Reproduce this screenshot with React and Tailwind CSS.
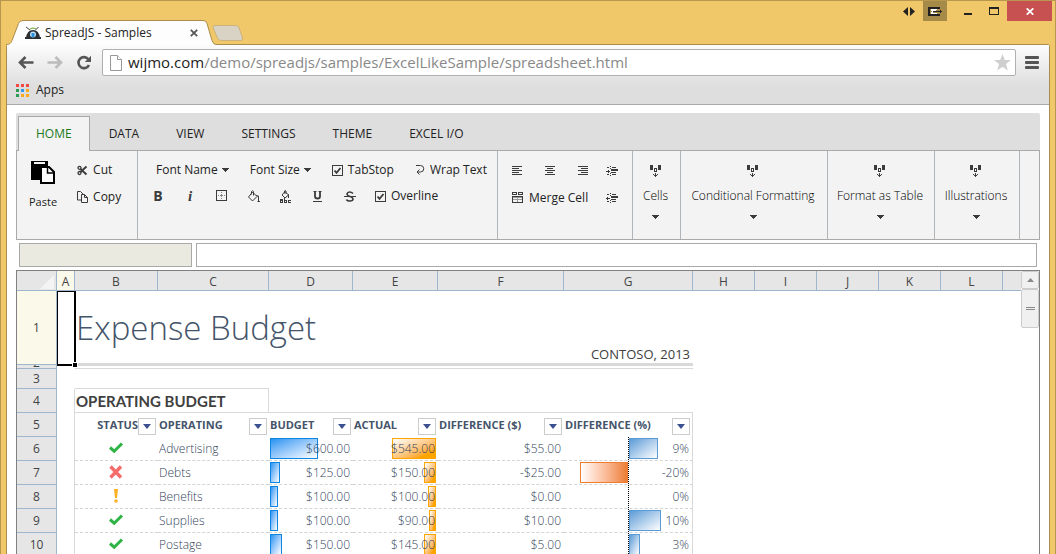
import React, { useState } from "react";

const TABS = ["HOME", "DATA", "VIEW", "SETTINGS", "THEME", "EXCEL I/O"];

const COLUMNS = ["A", "B", "C", "D", "E", "F", "G", "H", "I", "J", "K", "L", ""];

const HEADERS = ["OPERATING", "BUDGET", "ACTUAL", "DIFFERENCE ($)", "DIFFERENCE (%)"];

const ROWS = [
  { n: 6, status: "ok", name: "Advertising", budget: 600, actual: 545, diff: "$55.00", pct: 9.17 },
  { n: 7, status: "bad", name: "Debts", budget: 125, actual: 150, diff: "-$25.00", pct: -20 },
  { n: 8, status: "warn", name: "Benefits", budget: 100, actual: 100, diff: "$0.00", pct: 0 },
  { n: 9, status: "ok", name: "Supplies", budget: 100, actual: 90, diff: "$10.00", pct: 10 },
  { n: 10, status: "ok", name: "Postage", budget: 150, actual: 145, diff: "$5.00", pct: 3.33 },
];

// px per unit for the data bars
const MONEY_SCALE = 0.08;
const POS_SCALE = 3.2;
const NEG_SCALE = 2.4;

const money = (v) => `$${v.toFixed(2)}`;

/* ---------- Icons ---------- */

const Pix = ({ w = 12, h = 12, children, className = "" }) => (
  <svg
    width={w}
    height={h}
    viewBox={`0 0 ${w} ${h}`}
    fill="#3b3b3b"
    shapeRendering="crispEdges"
    className={`shrink-0 ${className}`}
    aria-hidden="true"
  >
    {children}
  </svg>
);

const ArrowDown = () => (
  <Pix w={7} h={4}>
    <path d="M0 0h7v1H0zM1 1h5v1H1zM2 2h3v1H2zM3 3h1v1H3z" />
  </Pix>
);

const BlocksIcon = () => (
  <Pix>
    <path d="M0 0h3v5H0zM8 0h3v5H8z" />
    <path d="M4 3h3v4H4zM5 4v2h1V4z" fillRule="evenodd" />
    <path d="M5 8h1v1H5zM3 9h1v1H3zM5 9h1v1H5zM7 9h1v1H7zM4 10h3v1H4zM5 11h1v1H5z" />
  </Pix>
);

const PasteIcon = () => (
  <svg width="24" height="23" viewBox="0 0 24 23" aria-hidden="true">
    <path d="M0 0h17v6H10v13H0z" fill="#000" />
    <path d="M3 1h11v2H3z" fill="#f3f3f3" />
    <path d="M10 6h8l5 5v11H10z" fill="#fff" stroke="#000" strokeWidth="2" />
    <path d="M16.500 6v6h6.500" fill="none" stroke="#000" strokeWidth="1.500" />
  </svg>
);

const CutIcon = () => (
  <svg width="11" height="11" viewBox="0 0 11 11" fill="none" stroke="#3b3b3b" aria-hidden="true">
    <circle cx="2.500" cy="2.800" r="1.500" strokeWidth="1.300" />
    <circle cx="2.500" cy="8" r="1.500" strokeWidth="1.300" />
    <path d="M3.500 4L9.500 9.500M3.500 7L9.500 1.500" strokeWidth="1.900" />
  </svg>
);

const CopyIcon = () => (
  <svg width="11" height="12" viewBox="0 0 11 12" fill="#f3f3f3" stroke="#3b3b3b" aria-hidden="true">
    <path d="M.5.5h3l2.500 2.500v6H.5z" />
    <path d="M4.500 3.500h3l3 3v5h-6z" />
    <path d="M7.500 3.500v3h3" fill="none" />
  </svg>
);

const BordersIcon = () => (
  <Pix>
    <path d="M0 0h11v11H0zM1 1v9h9V1z" fillRule="evenodd" />
    <path d="M5 2h1v1H5zM5 4h1v3H5zM5 8h1v1H5zM2 5h1v1H2zM4 5h3v1H4zM8 5h1v1H8z" fill="#888" />
  </Pix>
);

const FillIcon = () => (
  <svg width="12" height="12" viewBox="0 0 12 12" fill="none" stroke="#3b3b3b" aria-hidden="true">
    <path d="M4.500 2L9 6.500L4.500 11L.500 7z" />
    <path d="M3.500 4.500V1.500q1-1.500 2 0V5.500" />
    <path d="M8 5.500l2.500.5V11M9.500 11.500h2.500" />
  </svg>
);

const FontColorIcon = () => (
  <svg width="12" height="13" viewBox="0 0 12 13" fill="none" stroke="#3b3b3b" aria-hidden="true">
    <path d="M5 1.500L8.500 5L5 8L2 5z" />
    <path d="M4.500 3.500V1q.5-1 1.500 0V4M8.500 4.500V8" />
    <g shapeRendering="crispEdges" stroke="none" fill="#3b3b3b">
      <path d="M0 9h3v4H0zM1 11v1h1v-1z" fillRule="evenodd" />
      <path d="M4 8h1v5H4zM5 10h2v3H5zM5 11v1h1v-1z" fillRule="evenodd" />
      <path d="M8 10h3v1H9v1h2v1H8z" />
    </g>
  </svg>
);

const WrapIcon = () => (
  <svg width="10" height="10" viewBox="0 0 10 10" fill="none" stroke="#3b3b3b" aria-hidden="true">
    <path d="M1 .500h4.500a3 3 0 0 1 0 6.500H2.500" />
    <path d="M4.500 4.500L2 7l2.500 2.500" />
  </svg>
);

const AlignIcon = ({ d }) => (
  <Pix w={10} h={10}>
    <path d={d} />
  </Pix>
);

const IndentIcon = ({ out }) => (
  <Pix w={12} h={10}>
    <path d="M4 0h1v1H4zM4 2h1v1H4zM4 7h1v1H4zM4 9h1v1H4zM6 1h4v1H6zM1 1h2v1H1zM1 8h2v1H1zM6 8h4v1H6z" />
    <path d="M5 3h7v2H5zM5 6h5v1H5z" />
    {out ? <path d="M0 5h4v1H0zM1 4h1v3H1z" /> : <path d="M0 5h4v1H0zM2 4h1v3H2z" />}
  </Pix>
);

const MergeIcon = () => (
  <Pix>
    <path d="M0 0h5v3H0zM1 1v1h3V1zM6 0h5v3H6zM7 1v1h3V1z" fillRule="evenodd" />
    <path d="M0 4h11v7H0zM1 5v5h9V5z" fillRule="evenodd" />
    <path d="M1 5h9v1H1zM5 6h1v4H5zM1 7h9v1H1z" fill="#999" />
  </Pix>
);

const StatusIcon = ({ kind }) => {
  if (kind === "ok") {
    return (
      <svg width="16" height="14" viewBox="0 0 16 14" role="img" aria-label="On budget">
        <path d="M2 6.500l4.200 3.700L14 2.500" fill="none" stroke="#2fb344" strokeWidth="3" />
      </svg>
    );
  }
  if (kind === "bad") {
    return (
      <svg width="16" height="14" viewBox="0 0 16 14" role="img" aria-label="Over budget">
        <path d="M2.500 1.500L13 12.500M13 1.500L2.500 12.500" fill="none" stroke="#f56c6c" strokeWidth="3.400" />
      </svg>
    );
  }
  return (
    <svg width="16" height="14" viewBox="0 0 16 14" role="img" aria-label="Warning">
      <path d="M6 0h4l-1 9H7z" fill="#fdb022" />
      <circle cx="8" cy="12" r="1.800" fill="#fdb022" />
    </svg>
  );
};

/* ---------- Browser chrome ---------- */

const TitleBar = () => (
  <header className="flex h-[43px] items-end justify-between">
    <div className="flex items-end pl-[5px]">
      <div className="relative z-10 -mb-px h-[25px] w-[210px]">
        <svg className="absolute inset-0" width="210" height="25" viewBox="0 0 210 25" aria-hidden="true">
          <path
            d="M0 25v-.5C4 24.500 5 23 6 20.500L12.500 3.500Q13.700.500 17 .500H197Q200 .500 201 3.500L206 20.500Q207.500 24.500 210 24.500V25z"
            fill="#fdfdfd"
          />
          <path
            d="M0 24.500C4 24.500 5 23 6 20.500L12.500 3.500Q13.700.500 17 .500H197Q200 .500 201 3.500L206 20.500Q207.500 24.500 210 24.500"
            fill="none"
            stroke="#ab8d4b"
          />
        </svg>
        <div className="relative flex h-full items-center pr-[18px] pl-[19px]">
          <svg width="16" height="13" viewBox="0 0 16 13" aria-hidden="true">
            <path d="M1 1l4 3M13.500 1l-3 3" stroke="#444" strokeWidth="1" />
            <path d="M5 3l2.500-1L11 2.500" stroke="#7cb342" strokeWidth="1.200" fill="none" />
            <path d="M1 12Q2 4 8 4t7 8z" fill="#2b2d30" />
            <path d="M0 11h16v2H0z" fill="#2b2d30" />
            <circle cx="8" cy="8.500" r="3" fill="#bfe3fb" />
            <path d="M6.500 7h3v4h-3z" fill="#2f8fd8" />
          </svg>
          <span className="ml-1 flex-1 whitespace-nowrap text-[12px] text-[#222]">SpreadJS - Samples</span>
          <button type="button" aria-label="Close tab">
            <svg width="8" height="8" viewBox="0 0 8 8" stroke="#555" strokeWidth="1.800" aria-hidden="true">
              <path d="M.8.8l6.400 6.400M7.200.8L.8 7.200" />
            </svg>
          </button>
        </div>
      </div>
      <button type="button" aria-label="New tab" className="mb-[3px] -ml-1">
        <svg width="32" height="16" viewBox="0 0 32 16" aria-hidden="true">
          <path
            d="M3 .500H24Q26 .500 27 2.500L30.500 13Q31 15.500 29 15.500H9Q6.500 15.500 5.500 13L1 2.500Q.500.500 3 .500z"
            fill="#d8d3c5"
            stroke="#cdb27a"
          />
        </svg>
      </button>
    </div>
    <div className="flex items-start self-start pr-[3px]">
      <button type="button" aria-label="Move" className="flex h-5 w-7 items-center justify-center">
        <svg width="12" height="9" viewBox="0 0 12 9" fill="#222" aria-hidden="true">
          <path d="M5 0v9L0 4.500zM7 0v9l5-4.500z" />
        </svg>
      </button>
      <button type="button" aria-label="Displays" className="flex h-5 w-6 items-center justify-center bg-[#a68b48]">
        <Pix w={14} h={9}>
          <path d="M0 0h12v2H2v5h10v2H0z" fill="#222" />
          <path d="M3 2h6v1H8v1H6v1H5v1h4v1H3V5h1V4H3z" fill="#fff" />
          <path d="M5 4h9v1H5zM12 3h1v3h-1z" fill="#222" />
        </Pix>
      </button>
      <button type="button" aria-label="Minimize" className="ml-[7px] flex h-5 w-[27px] items-center justify-center">
        <span className="mt-[6px] h-[2px] w-2 bg-[#222]" />
      </button>
      <button type="button" aria-label="Maximize" className="flex h-5 w-[26px] items-center justify-center">
        <span className="h-2 w-[10px] border border-t-2 border-[#222]" />
      </button>
      <button type="button" aria-label="Close" className="flex h-5 w-[45px] items-center justify-center bg-[#c75050]">
        <svg width="8" height="7" viewBox="0 0 8 7" stroke="#fff" strokeWidth="1.700" aria-hidden="true">
          <path d="M.7.300l6.600 6.400M7.300.300L.7 6.700" />
        </svg>
      </button>
    </div>
  </header>
);

const BrowserToolbar = () => (
  <div className="border-b border-[#a9a9a9] bg-linear-to-b from-[#fcfcfc] from-0% to-[#dedede] to-70% pt-1">
    <div className="flex items-center pr-[10px] pl-[11px]">
      <button type="button" aria-label="Back" className="mr-[13px]">
        <svg width="16" height="13" viewBox="0 0 16 13" fill="none" stroke="#555" strokeWidth="2.600" aria-hidden="true">
          <path d="M15.500 6.500H2M7.500 1L2 6.500L7.500 12" />
        </svg>
      </button>
      <button type="button" aria-label="Forward" className="mr-[13px]">
        <svg width="16" height="13" viewBox="0 0 16 13" fill="none" stroke="#bcbcbc" strokeWidth="2.600" aria-hidden="true">
          <path d="M.500 6.500H14M8.500 1L14 6.500L8.500 12" />
        </svg>
      </button>
      <button type="button" aria-label="Reload" className="mr-[10px]">
        <svg width="16" height="16" viewBox="0 0 16 16" aria-hidden="true">
          <path d="M12.300 4.200A5.500 5.500 0 1 0 13 10" fill="none" stroke="#555" strokeWidth="2.600" />
          <path d="M15 .800V7H8.800z" fill="#555" />
        </svg>
      </button>
      <div className="flex h-[27px] flex-1 items-center rounded-[2px] border border-[#b0b0b0] bg-white pr-1 pl-[7px]">
        <svg width="12" height="16" viewBox="0 0 12 16" fill="#fff" stroke="#999" aria-hidden="true">
          <path d="M.500.500h7l4 4v11H.500z" />
          <path d="M7.500.500v4h4" />
        </svg>
        <span className="ml-[6px] flex-1 whitespace-nowrap text-[15px] text-[#888]">
          <span className="text-[#222]">wijmo.com</span>/demo/spreadjs/samples/ExcelLikeSample/spreadsheet.html
        </span>
        <button type="button" aria-label="Bookmark this page">
          <svg width="17" height="17" viewBox="0 0 17 17" fill="#cfcfcf" aria-hidden="true">
            <path d="M8.500 0l2.300 6H17l-5 4 1.800 6.500-5.300-3.800-5.300 3.800L5 10 0 6h6.200z" />
          </svg>
        </button>
      </div>
      <button type="button" aria-label="Menu" className="ml-[9px] flex w-[14px] flex-col gap-[2px]">
        <span className="h-[3px] rounded-[1px] bg-[#555]" />
        <span className="h-[3px] rounded-[1px] bg-[#555]" />
        <span className="h-[3px] rounded-[1px] bg-[#555]" />
      </button>
    </div>
    <nav className="flex h-7 items-center pl-[9px]">
      <a href="#apps" className="flex items-center gap-[7px] text-[12px] text-[#222]">
        <Pix w={13} h={13}>
          <path d="M0 0h3v3H0zM5 0h3v3H5zM10 0h3v3h-3z" fill="#f04a43" />
          <path d="M0 5h3v3H0zM0 10h3v3H0z" fill="#2c9b58" />
          <path d="M5 5h3v3H5z" fill="#2f9cf2" />
          <path d="M10 5h3v3h-3zM5 10h3v3H5zM10 10h3v3h-3z" fill="#fba919" />
        </Pix>
        Apps
      </a>
    </nav>
  </div>
);

/* ---------- Ribbon ---------- */

const CheckItem = ({ label, className = "" }) => (
  <label className={`flex items-center gap-[5px] ${className}`}>
    <span className="grid">
      <input
        type="checkbox"
        defaultChecked
        className="peer col-start-1 row-start-1 size-[11px] appearance-none border border-[#3b3b3b] bg-[#f3f3f3]"
      />
      <svg
        width="11"
        height="11"
        viewBox="0 0 11 11"
        className="pointer-events-none invisible col-start-1 row-start-1 peer-checked:visible"
        aria-hidden="true"
      >
        <path d="M2.500 5.500l2 2.300L8.500 3" fill="none" stroke="#3b3b3b" strokeWidth="1.800" />
      </svg>
    </span>
    {label}
  </label>
);

const IconButton = ({ label, className = "w-8", children }) => (
  <button type="button" aria-label={label} className={`flex h-4 items-center justify-center ${className}`}>
    {children}
  </button>
);

const DropGroup = ({ label, className }) => (
  <button
    type="button"
    className={`flex shrink-0 flex-col items-center border-r border-[#b0b5ba] pt-[14px] pr-[2px] font-light text-black ${className}`}
  >
    <BlocksIcon />
    <span className="mt-[11px] mb-[11px] whitespace-nowrap leading-4">{label}</span>
    <ArrowDown />
  </button>
);

const Ribbon = () => {
  const [active, setActive] = useState("HOME");

  return (
    <section>
      <div role="tablist" className="flex items-end gap-px rounded-t-[2px] bg-[#dedede] pt-[3px] pl-[2px]">
        {TABS.map((tab) => (
          <button
            key={tab}
            type="button"
            role="tab"
            aria-selected={tab === active}
            onClick={() => setActive(tab)}
            className={
              tab === active
                ? "relative -mb-px h-[35px] border border-b-0 border-[#a9a9a9] bg-[#f3f3f3] px-[17px] text-[#1d7a1d]"
                : "-mb-px h-[35px] border border-transparent px-[17px] text-[#222]"
            }
          >
            {tab}
          </button>
        ))}
      </div>
      <div className="flex h-[90px] overflow-hidden border border-[#a9a9a9] bg-[#f3f3f3] text-[#222]">
        {/* Clipboard */}
        <div className="flex w-[121px] shrink-0 border-r border-[#b0b5ba] pt-[10px] pl-3">
          <button type="button" className="flex flex-col items-center self-start text-[11px] leading-4">
            <PasteIcon />
            <span className="mt-[10px]">Paste</span>
          </button>
          <div className="mt-px ml-5 flex flex-col items-start gap-[11px]">
            <button type="button" className="flex items-center gap-[5px] leading-4">
              <CutIcon /> Cut
            </button>
            <button type="button" className="flex items-center gap-[5px] leading-4">
              <CopyIcon /> Copy
            </button>
          </div>
        </div>

        {/* Font */}
        <div className="w-[360px] shrink-0 border-r border-[#b0b5ba] pt-[11px] leading-4 whitespace-nowrap">
          <div className="flex items-center gap-[21px] pl-[18px]">
            <button type="button" className="flex items-center gap-1">
              Font Name <ArrowDown />
            </button>
            <button type="button" className="flex items-center gap-1">
              Font Size <ArrowDown />
            </button>
            <CheckItem label="TabStop" />
            <button type="button" className="flex items-center gap-[5px]">
              <WrapIcon /> Wrap Text
            </button>
          </div>
          <div className="mt-[10px] flex items-center pl-1 font-['Liberation_Serif',serif] text-[15px] font-bold text-[#3b3b3b]">
            <IconButton label="Bold">
              <span className="font-['Open_Sans',sans-serif] text-[14px]">B</span>
            </IconButton>
            <IconButton label="Italic">
              <span className="italic">i</span>
            </IconButton>
            <IconButton label="Borders">
              <BordersIcon />
            </IconButton>
            <IconButton label="Fill color">
              <FillIcon />
            </IconButton>
            <IconButton label="Font color">
              <FontColorIcon />
            </IconButton>
            <IconButton label="Underline">
              <svg width="10" height="11" viewBox="0 0 10 11" fill="none" stroke="#3b3b3b" aria-hidden="true">
                <path d="M2 0v5.500q0 2 2.500 2t2.500-2V0" strokeWidth="1.800" />
                <path d="M.500.500h3M5.500.500h3M0 10.500h9" />
              </svg>
            </IconButton>
            <IconButton label="Strikethrough">
              <svg width="12" height="11" viewBox="0 0 12 11" fill="none" stroke="#3b3b3b" aria-hidden="true">
                <path d="M9 2.500Q7.500 1 5.500 1T3 3q0 1.500 3 2.500t3 2.500q0 2-3 2T2.500 8.500" strokeWidth="1.600" />
                <path d="M0 5.500h12" />
              </svg>
            </IconButton>
            <CheckItem
              label="Overline"
              className="ml-[9px] font-['Open_Sans',sans-serif] text-[12px] font-normal text-[#222]"
            />
          </div>
        </div>

        {/* Alignment */}
        <div className="w-[135px] shrink-0 border-r border-[#b0b5ba] pt-[12px] pr-[14px] pl-[14px] leading-4 whitespace-nowrap">
          <div className="flex items-center justify-between">
            <div className="flex gap-[23px]">
              <IconButton label="Align left" className="">
                <AlignIcon d="M0 0h10v1H0zM0 2h7v1H0zM0 4h10v1H0zM0 6h7v1H0zM0 8h10v1H0z" />
              </IconButton>
              <IconButton label="Align center" className="">
                <AlignIcon d="M0 0h10v1H0zM2 2h6v1H2zM0 4h10v1H0zM2 6h6v1H2zM0 8h10v1H0z" />
              </IconButton>
              <IconButton label="Align right" className="">
                <AlignIcon d="M0 0h10v1H0zM3 2h7v1H3zM0 4h10v1H0zM3 6h7v1H3zM0 8h10v1H0z" />
              </IconButton>
            </div>
            <IconButton label="Increase indent" className="">
              <IndentIcon />
            </IconButton>
          </div>
          <div className="mt-[11px] flex items-center justify-between">
            <button type="button" className="flex items-center gap-[5px]">
              <MergeIcon /> Merge Cell
            </button>
            <IconButton label="Decrease indent" className="">
              <IndentIcon out />
            </IconButton>
          </div>
        </div>

        <DropGroup label="Cells" className="w-12" />
        <DropGroup label="Conditional Formatting" className="w-[147px]" />
        <DropGroup label="Format as Table" className="w-[107px]" />
        <DropGroup label="Illustrations" className="w-[85px]" />
      </div>
    </section>
  );
};

/* ---------- Spreadsheet ---------- */

const RowHead = ({ n, selected }) => (
  <th
    scope="row"
    className={`border-r border-b border-[#9eb6ce] pt-px text-center font-normal text-[#444] ${
      selected ? "bg-[#fbf9ea]" : "bg-[#e6e6e6]"
    }`}
  >
    {n}
  </th>
);

const FilterButton = ({ label }) => (
  <button
    type="button"
    aria-label={`Filter ${label}`}
    className="flex h-[17px] w-[18px] shrink-0 items-center justify-center border border-[#ccc] bg-white"
  >
    <svg width="8" height="5" viewBox="0 0 8 5" aria-hidden="true">
      <path d="M0 0h8L4 5z" fill="#3c4f8f" />
    </svg>
  </button>
);

const HeaderCell = ({ label, className = "" }) => (
  <td className={`align-bottom ${className}`}>
    <div className="flex items-start justify-between pr-[2px] pb-[2px] pl-px">
      <span className="flex-1 text-[11px] leading-[14px] font-bold whitespace-nowrap text-[#44546a]">{label}</span>
      <FilterButton label={label} />
    </div>
  </td>
);

const DataRow = ({ row }) => {
  const cell = "border-b border-dashed border-[#d4d4d4]";
  const num = `${cell} relative pr-[3px] text-right`;

  return (
    <tr className="h-6 text-[12px] font-light text-[#34445a]">
      <RowHead n={row.n} />
      <td className="border-r border-[#d9d9d9]" />
      <td className={cell}>
        <span className="flex justify-center pr-[2px] pb-[2px]">
          <StatusIcon kind={row.status} />
        </span>
      </td>
      <td className={`${cell} pl-px`}>{row.name}</td>
      <td className={num}>
        <span
          className="absolute top-px left-px h-[21px] border border-[#0d86e3] bg-linear-to-br from-[#1b93f0] to-white"
          style={{ width: Math.round(row.budget * MONEY_SCALE) }}
        />
        <span className="relative">{money(row.budget)}</span>
      </td>
      <td className={num}>
        <span
          className="absolute top-px right-[2px] h-[21px] border border-[#ffa500] bg-linear-to-br from-white to-[#ffa500] to-80%"
          style={{ width: Math.round(row.actual * MONEY_SCALE) }}
        />
        <span className="relative">{money(row.actual)}</span>
      </td>
      <td className={num}>{row.diff}</td>
      <td className={`${num} border-r border-r-[#d9d9d9] [border-right-style:solid]`}>
        <span className="absolute top-0 left-[64px] h-[23px] border-l border-dotted border-black" />
        {row.pct > 0 && (
          <span
            className="absolute top-px left-[65px] h-[21px] border border-[#5b9bd5] bg-linear-to-br from-[#5b9bd5] to-white"
            style={{ width: Math.round(row.pct * POS_SCALE) }}
          />
        )}
        {row.pct < 0 && (
          <span
            className="absolute top-px right-[64px] h-[21px] border border-[#ed7d31] bg-linear-to-r from-white to-[#ed7d31]"
            style={{ width: -row.pct * NEG_SCALE }}
          />
        )}
        <span className="relative">{Math.round(row.pct)}%</span>
      </td>
      <td colSpan={6} />
    </tr>
  );
};

const Sheet = () => (
  <div className="mt-[3px] flex min-h-0 flex-1 overflow-hidden border border-b-0 border-[#808080]">
    <table className="w-full min-w-0 flex-1 table-fixed border-separate border-spacing-0 self-start leading-4">
      <colgroup>
        <col className="w-[40px]" />
        <col className="w-[18px]" />
        <col className="w-[83px]" />
        <col className="w-[111px]" />
        <col className="w-[84px]" />
        <col className="w-[85px]" />
        <col className="w-[126px]" />
        <col className="w-[129px]" />
        <col className="w-[62px]" />
        <col className="w-[62px]" />
        <col className="w-[62px]" />
        <col className="w-[62px]" />
        <col className="w-[62px]" />
        <col />
      </colgroup>
      <thead>
        <tr className="h-5">
          <td className="border-r border-b border-[#9eb6ce] bg-[#e6e6e6] align-bottom">
            <svg width="16" height="16" viewBox="0 0 16 16" className="ml-auto block" aria-hidden="true">
              <path d="M14 1v14H0z" fill="#f4f4f4" />
            </svg>
          </td>
          {COLUMNS.map((c, i) => (
            <th
              key={i}
              scope="col"
              className={`border-b border-[#9eb6ce] pt-[2px] text-center font-normal text-[#444] ${
                c ? "border-r" : ""
              } ${c === "A" ? "bg-[#fbf9ea]" : "bg-[#e6e6e6]"}`}
            >
              {c}
            </th>
          ))}
        </tr>
      </thead>
      <tbody>
        <tr className="h-[74px]">
          <RowHead n={1} selected />
          <td className="relative">
            <span className="absolute top-0 -right-px -bottom-px left-0 z-10 border-t border-r-2 border-b-2 border-l border-black" />
            <span className="absolute -right-[3px] -bottom-[3px] z-20 size-[6px] border border-white bg-black" />
          </td>
          <td
            colSpan={5}
            className="border-b-2 border-[#d9d9d9] pt-[2px] pl-px text-[33px] leading-10 font-light whitespace-nowrap text-[#44546a]"
          >
            Expense Budget
          </td>
          <td className="border-b-2 border-[#d9d9d9] pr-[3px] pb-px text-right align-bottom text-[13px] text-[#404040]">
            CONTOSO, 2013
          </td>
          <td colSpan={6} />
        </tr>
        <tr className="h-1">
          <th scope="row" className="border-r border-b border-[#9eb6ce] bg-[#e6e6e6] font-normal text-[#444]">
            <span className="flex h-[3px] items-end justify-center overflow-hidden leading-[10px]">2</span>
          </th>
          <td />
          <td colSpan={6} className="border-t border-b border-[#d9d9d9]" />
          <td colSpan={6} />
        </tr>
        <tr className="h-5">
          <RowHead n={3} />
          <td />
          <td colSpan={2} className="border-b border-[#d9d9d9]" />
          <td colSpan={10} />
        </tr>
        <tr className="h-6">
          <RowHead n={4} />
          <td className="border-r border-[#d9d9d9]" />
          <td
            colSpan={2}
            className="border-r border-b border-[#d9d9d9] pl-px font-['Lato',sans-serif] text-[15px] font-bold whitespace-nowrap text-[#404040]"
          >
            OPERATING BUDGET
          </td>
          <td colSpan={4} className="border-b border-[#d9d9d9]" />
          <td colSpan={6} />
        </tr>
        <tr className="h-6">
          <RowHead n={5} />
          <td className="border-r border-[#d9d9d9]" />
          <HeaderCell label="STATUS" className="text-right" />
          {HEADERS.map((h) => (
            <HeaderCell key={h} label={h} className={h === "DIFFERENCE (%)" ? "border-r border-[#d9d9d9]" : ""} />
          ))}
          <td colSpan={6} />
        </tr>
        {ROWS.map((row) => (
          <DataRow key={row.n} row={row} />
        ))}
      </tbody>
    </table>

    {/* Vertical scrollbar */}
    <div className="w-[18px] shrink-0 bg-white">
      <button
        type="button"
        aria-label="Scroll up"
        className="flex h-[18px] w-full items-center justify-center rounded-[2px] border border-[#ccc] bg-[#f0f0f0]"
      >
        <svg width="7" height="4" viewBox="0 0 7 4" aria-hidden="true">
          <path d="M3.500 0L7 4H0z" fill="#888" />
        </svg>
      </button>
      <div className="flex h-[39px] flex-col items-center justify-center gap-px rounded-[2px] border border-[#ccc] bg-[#f0f0f0]">
        <span className="h-px w-[9px] bg-[#888]" />
        <span className="h-px w-[9px] bg-[#888]" />
      </div>
    </div>
  </div>
);

export default function App() {
  return (
    <div className="flex h-screen flex-col overflow-hidden border border-b-0 border-[#b8974f] bg-[#f0c869] font-['Open_Sans','Noto_Sans',sans-serif] text-[12px]">
      <TitleBar />
      <div className="mx-[5px] flex min-h-0 flex-1 flex-col rounded-t-[3px] border border-b-0 border-[#ab8d4b] bg-white">
        <BrowserToolbar />
        <main className="flex min-h-0 flex-1 flex-col px-[9px] pt-2">
          <Ribbon />
          <div className="mt-[3px] flex gap-1 pr-[3px] pl-[3px]">
            <input
              type="text"
              aria-label="Name box"
              className="h-6 w-[173px] border border-[#a9a9a9] bg-[#eaeae1] px-1"
            />
            <input
              type="text"
              aria-label="Formula bar"
              className="h-6 min-w-0 flex-1 border border-[#a9a9a9] bg-white px-1"
            />
          </div>
          <Sheet />
        </main>
      </div>
    </div>
  );
}
